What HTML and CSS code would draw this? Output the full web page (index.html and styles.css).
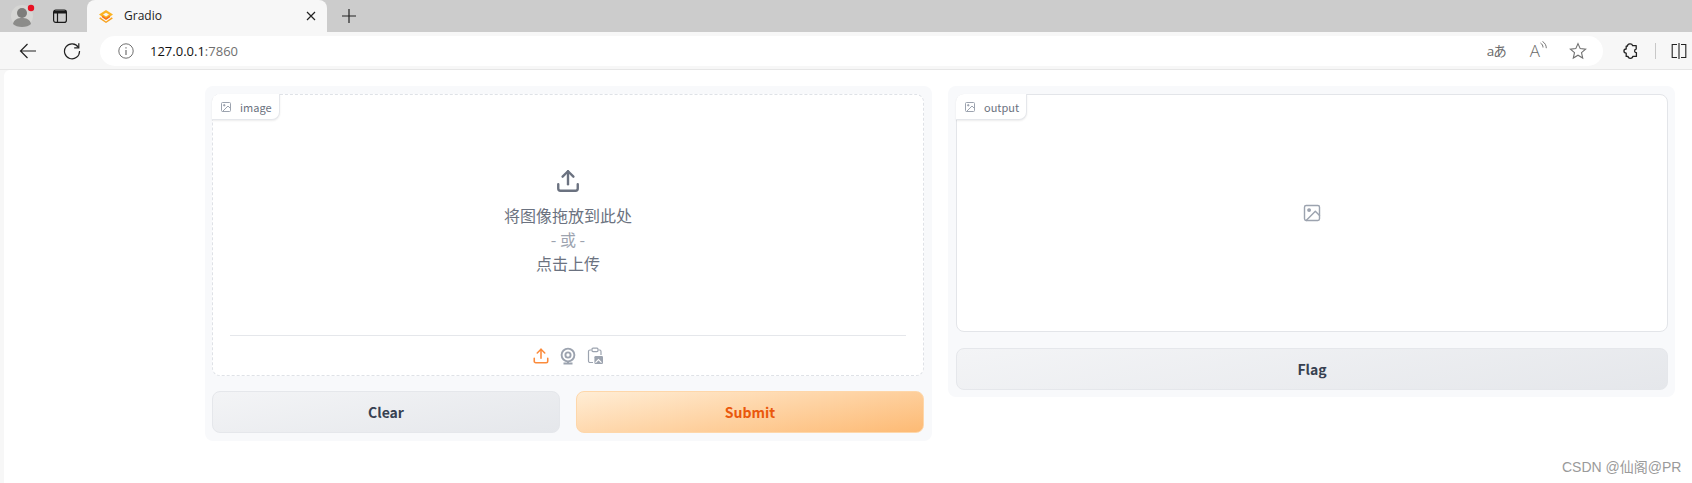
FILE: index.html
```html
<!DOCTYPE html>
<html lang="zh">
<head>
<meta charset="utf-8">
<title>Gradio</title>
<link rel="stylesheet" href="styles.css">
</head>
<body>
<div class="tabbar">
  <div class="profile">
    <svg width="32" height="32" viewBox="0 0 32 32"><circle cx="16" cy="16" r="11" fill="#d6d6d4"/><circle cx="16" cy="13" r="5" fill="#7d7d7b"/><path d="M7 24c1-5 5-6 9-6s8 1 9 6c-2 2-5 3-9 3s-7-1-9-3z" fill="#8c8c8a"/><circle cx="25" cy="8" r="3.2" fill="#e81123"/></svg>
  </div>
  <div class="tabs-btn">
    <svg width="16" height="16" viewBox="0 0 16 16" fill="none" stroke="#1a1a1a" stroke-width="1.2"><rect x="1.6" y="2" width="12.8" height="12.4" rx="2.2"/><path d="M1.8 5h12.4M5.5 5v9" /><path d="M2 2.6h12V5H2z" fill="#1a1a1a" stroke="none"/></svg>
  </div>
  <div class="tab">
    <svg class="favicon" width="16" height="16" viewBox="0 0 16 16"><path d="M8 2 15 6.6 8 11.2 1 6.6z" fill="#fbb321"/><path d="M2.2 9.2 8 13.4l5.8-4.2 1 1.2L8 15 1.2 10.4z" fill="#f9a11b"/><path d="M5 6.6 8 4.8l3 1.8L8 8.4z" fill="#f7f7f7"/><path d="M4 8.4 8 11l4-2.6" fill="none" stroke="#f97316" stroke-width="1.6"/></svg>
    <span class="tab-title">Gradio</span>
    <svg class="tab-close" width="12" height="12" viewBox="0 0 12 12" stroke="#222" stroke-width="1.2"><path d="M2 2l8 8M10 2l-8 8"/></svg>
  </div>
  <svg class="new-tab" width="16" height="16" viewBox="0 0 16 16" stroke="#222" stroke-width="1.2"><path d="M8 1v14M1 8h14"/></svg>
</div>
<div class="toolbar">
  <svg class="nav-back" width="18" height="18" viewBox="0 0 18 18" fill="none" stroke="#222" stroke-width="1.2"><path d="M17 9H1.5M8.5 2 1.5 9l7 7"/></svg>
  <svg class="nav-reload" width="18" height="18" viewBox="0 0 18 18" fill="none" stroke="#222" stroke-width="1.2"><path d="M15.4 5.4A7.5 7.5 0 1 0 16.5 9"/><path d="M15.8 1.2v4.6h-4.6"/></svg>
  <div class="urlbar">
    <svg class="info" width="16" height="16" viewBox="0 0 16 16" fill="none" stroke="#707070" stroke-width="1"><circle cx="8" cy="8" r="7.2"/><path d="M8 7v5M8 4.2v1.3" stroke-width="1.2"/></svg>
    <span class="url"><span class="host">127.0.0.1</span>:7860</span>
    <span class="url-actions">
      <span class="translate">aあ</span>
      <span class="read">A<svg width="7" height="10" viewBox="0 0 7 10" fill="none" stroke="#666" stroke-width="0.9"><path d="M0.5 2c1.6 1 2.5 2.6 2.5 4.5M2.5 0.5C5 2 6.3 4.4 6.3 7.2"/></svg></span>
      <svg width="18" height="18" viewBox="0 0 18 18" fill="none" stroke="#707070" stroke-width="1.1"><path d="M9 1.6l2.2 5 5.4.5-4.1 3.6 1.2 5.3L9 13.2 4.3 16l1.2-5.3L1.4 7.1l5.4-.5z"/></svg>
    </span>
  </div>
  <svg class="ext" width="18" height="18" viewBox="0 0 18 18" fill="none" stroke="#222" stroke-width="1.3" stroke-linejoin="round"><path d="M5.4 4.2C5.4 1.4 10 1 10.6 3.6H14.2V7C12.2 7 12 10.8 14.4 10.6V14.4H10.8C10.6 16.9 6.2 16.9 6 14.4H4.2V11.2C1.2 11.2 1.2 7 4.2 7V4.2z"/></svg>
  <span class="sep"></span>
  <svg class="split" width="16" height="16" viewBox="0 0 16 16" fill="none" stroke="#222" stroke-width="1.1"><path d="M8 0v16M6 1.5H1.2v13H6M10 1.5h4.8v13H10"/></svg>
</div>
<main class="page">
  <div class="columns">
    <section class="panel panel-left">
      <div class="block block-dashed">
        <div class="label">
          <svg class="label-icon" width="12" height="12" viewBox="0 0 24 24" fill="none" stroke="#9ca3af" stroke-width="2"><rect x="3" y="3" width="18" height="18" rx="2"/><circle cx="8.5" cy="8.5" r="1.5" fill="#9ca3af"/><path d="M21 15 16 10 5 21"/></svg>
          <span>image</span>
        </div>
        <div class="drop">
          <svg class="upload-big" width="26" height="26" viewBox="0 0 24 24" fill="none" stroke="#6b7280" stroke-width="2.2" stroke-linecap="round" stroke-linejoin="round"><path d="M21 15v4a2 2 0 0 1-2 2H5a2 2 0 0 1-2-2v-4"/><path d="M17 8l-5-5-5 5"/><path d="M12 3v12"/></svg>
          <span class="drop-text">将图像拖放到此处</span>
          <span class="drop-or">- 或 -</span>
          <span class="drop-text">点击上传</span>
        </div>
        <div class="sources">
          <svg width="18" height="18" viewBox="0 0 24 24" fill="none" stroke="#fb8b3c" stroke-width="2.1" stroke-linecap="round" stroke-linejoin="round"><path d="M21 15v4a2 2 0 0 1-2 2H5a2 2 0 0 1-2-2v-4"/><path d="M17 8l-5-5-5 5"/><path d="M12 3v12"/></svg>
          <svg width="18" height="18" viewBox="0 0 18 18" fill="none" stroke="#9ca3af" stroke-width="1.9"><circle cx="9" cy="8" r="6.4"/><circle cx="9" cy="8" r="2.6"/><path d="M4.5 16.6h9M9 14v2" stroke-width="2"/></svg>
          <svg width="18" height="18" viewBox="0 0 18 18" fill="none" stroke="#9ca3af" stroke-width="1.2"><path d="M5.5 3H4a1.5 1.5 0 0 0-1.5 1.5V14A1.5 1.5 0 0 0 4 15.5h3M12.5 3H14a1.5 1.5 0 0 1 1 1.4V8"/><rect x="6" y="1.2" width="6" height="3.4" rx="1"/><rect x="8.4" y="9" width="8.6" height="8" rx="1.2" fill="#9ca3af" stroke="none"/><path d="M9.5 15.6l3-3 3 3" stroke="#fff"/></svg>
        </div>
      </div>
      <div class="actions">
        <button class="btn btn-secondary">Clear</button>
        <button class="btn btn-primary">Submit</button>
      </div>
    </section>
    <section class="panel panel-right">
      <div class="block block-solid">
        <div class="label">
          <svg class="label-icon" width="12" height="12" viewBox="0 0 24 24" fill="none" stroke="#9ca3af" stroke-width="2"><rect x="3" y="3" width="18" height="18" rx="2"/><circle cx="8.5" cy="8.5" r="1.5" fill="#9ca3af"/><path d="M21 15 16 10 5 21"/></svg>
          <span>output</span>
        </div>
        <svg class="empty-icon" width="20" height="20" viewBox="0 0 24 24" fill="none" stroke="#9ca3af" stroke-width="1.7" stroke-linecap="round" stroke-linejoin="round"><rect x="3" y="3" width="18" height="18" rx="2"/><circle cx="8.5" cy="8.5" r="1.5" fill="#9ca3af"/><path d="M21 15 16 10 5 21"/></svg>
      </div>
      <button class="btn btn-secondary btn-flag">Flag</button>
    </section>
  </div>
  <div class="watermark">CSDN @仙阁@PR</div>
</main>
</body>
</html>
```

FILE: styles.css
```css
* { box-sizing: border-box; }
html, body { margin: 0; height: 100%; }
body {
  width: 1692px;
  height: 483px;
  overflow: hidden;
  background: #f7f7f7;
  font-family: "Noto Sans CJK SC", "Noto Sans", sans-serif;
  display: flex;
  flex-direction: column;
}
.tabbar {
  height: 32px;
  flex: none;
  background: #cccccc;
  display: flex;
  align-items: center;
}
.profile { width: 32px; height: 32px; margin-left: 6px; flex: none; }
.profile svg { display: block; }
.tabs-btn { margin-left: 14px; width: 16px; height: 16px; flex: none; margin-right: 19px; }
.tabs-btn svg { display: block; }
.tab {
  width: 240px;
  height: 32px;
  background: #f7f7f7;
  border-radius: 8px 8px 0 0;
  display: flex;
  align-items: center;
  padding: 0 10px 0 11px;
  flex: none;
}
.favicon { flex: none; }
.tab-title {
  margin-left: 10px;
  font: 12px/16px "Open Sans", sans-serif;
  color: #222;
  flex: 1;
}
.new-tab { margin-left: 14px; flex: none; }
.toolbar {
  height: 38px;
  flex: none;
  background: #f7f7f7;
  display: flex;
  align-items: center;
  border-bottom: 1px solid #e6e6e6;
}
.nav-back { margin-left: 19px; flex: none; }
.nav-reload { margin-left: 26px; flex: none; }
.urlbar {
  margin-left: 19px;
  width: 1503px;
  height: 30px;
  background: #fff;
  border-radius: 15px;
  display: flex;
  align-items: center;
  padding-left: 18px;
  flex: none;
}
.url {
  margin-left: 16px;
  font: 13px/18px "Open Sans", sans-serif;
  color: #6f6f6f;
}
.host { color: #111; }
.url-actions {
  margin-left: auto;
  margin-right: 16px;
  display: flex;
  align-items: center;
  gap: 22px;
  color: #6a6a6a;
}
.translate {
  font: 13.5px/16px "Open Sans", "Noto Sans CJK JP", sans-serif;
  letter-spacing: -1px;
  margin-right: 2px;
}
.read { font: 300 17px/20px "Open Sans", sans-serif; display: flex; align-items: flex-start; }
.ext { margin-left: 19px; flex: none; }
.sep { width: 1px; height: 16px; background: #c8c8c8; margin-left: 15px; flex: none; }
.split { margin-left: 15px; flex: none; }
.page {
  position: relative;
  flex: 1;
  margin-left: 4px;
  background: #fff;
  border-radius: 6px 0 0 0;
  padding: 16px 17px 0 201px;
}
.columns { display: flex; align-items: flex-start; gap: 16px; }
.panel {
  background: #f8f9fb;
  border-radius: 8px;
  padding: 8px;
  display: flex;
  flex-direction: column;
}
.panel-left { width: 727px; height: 355px; padding-left: 7px; }
.panel-right { width: 727px; height: 311px; padding-right: 7px; }
.block { position: relative; background: #fff; border-radius: 8px; flex: none; }
.block-dashed { height: 282px; border: 1px dashed #dfe2e7; display: flex; flex-direction: column; }
.block-solid {
  height: 238px;
  border: 1px solid #e3e5e9;
  display: flex;
  align-items: center;
  justify-content: center;
}
.label {
  position: absolute;
  left: -1px;
  top: -1px;
  height: 26px;
  padding: 0 7px 0 8px;
  background: #fff;
  border: 1px solid #e5e7eb;
  border-top: none;
  border-left: none;
  border-radius: 8px 0 8px 0;
  box-shadow: 0 1px 2px rgba(0, 0, 0, 0.08);
  display: flex;
  align-items: center;
  gap: 8px;
  font-size: 11px;
  line-height: 16px;
  color: #6b7280;
}
.label-icon { flex: none; }
.drop {
  height: 241px;
  padding-top: 73px;
  margin: 0 17px;
  border-bottom: 1px solid #e5e7eb;
  display: flex;
  flex-direction: column;
  align-items: center;
  flex: none;
}
.upload-big { margin-bottom: 9px; flex: none; }
.drop-text { font-size: 16px; line-height: 24px; color: #6b7280; }
.drop-or { font-size: 16px; line-height: 24px; color: #9ca3af; }
.sources {
  flex: 1;
  display: flex;
  align-items: center;
  justify-content: center;
  gap: 9px;
}
.actions { display: flex; gap: 16px; margin-top: 15px; }
.btn {
  height: 42px;
  border-radius: 8px;
  font-family: inherit;
  font-size: 14px;
  font-weight: 600;
  padding: 0;
  cursor: pointer;
  flex: 1;
}
.btn-secondary {
  border: 1px solid #e5e7eb;
  background: linear-gradient(170deg, #f3f4f6, #e5e7eb);
  color: #374151;
}
.btn-primary {
  border: 1px solid #fed7aa;
  background: linear-gradient(170deg, #ffedd5, #fdba74);
  color: #ea580c;
}
.btn-flag { flex: none; width: 100%; margin-top: 16px; }
.watermark {
  position: absolute;
  right: 0;
  top: 388px;
  width: 130px;
  font: 14px/18px "Liberation Sans", "Noto Sans CJK SC", sans-serif;
  color: #9a9a9a;
}
```
